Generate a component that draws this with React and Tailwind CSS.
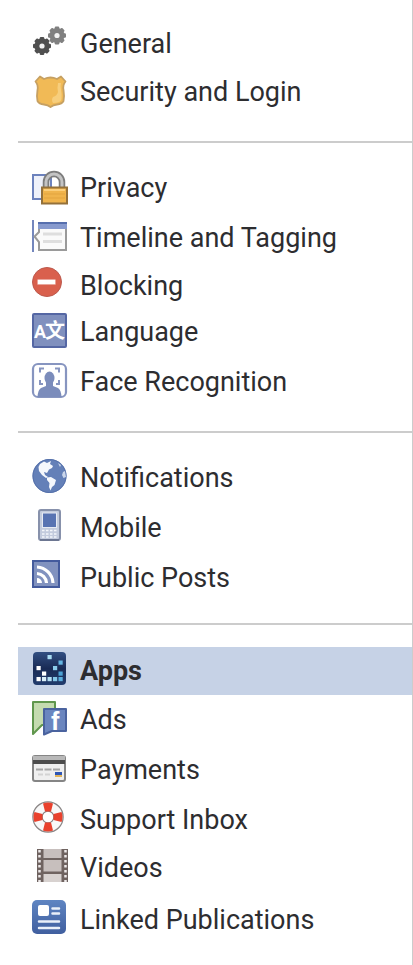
import { useState } from 'react';

function Icon({ children }) {
  return (
    <svg viewBox="0 0 40 40" className="size-10 shrink-0" aria-hidden="true">
      {children}
    </svg>
  );
}

function Gear({ cx, cy, color }) {
  return (
    <g transform={`translate(${cx} ${cy})`}>
      {[0, 45, 90, 135].map((angle) => (
        <rect key={angle} x="-2.3" y="-9" width="4.6" height="18" rx="1.2" fill={color} transform={`rotate(${angle})`} />
      ))}
      <circle r="7.6" fill={color} />
      <circle r="2.6" fill="#f3f3f3" />
    </g>
  );
}

function GearsIcon() {
  return (
    <Icon>
      <Gear cx={27} cy={11.5} color="#808080" />
      <Gear cx={12} cy={22} color="#505050" />
    </Icon>
  );
}

function ShieldIcon() {
  return (
    <Icon>
      <path
        d="M10 4.5 L14 7 Q20.5 4 27 7 L31 4.5 L35.5 9.5 Q32.5 13 33.5 18 Q34.5 24 33.5 29 Q32 32 27 32.5 Q23 33 20.5 35 Q18 33 14 32.5 Q9 32 7.5 29 Q6.5 24 7.5 18 Q8.5 13 5.5 9.5 Z"
        fill="#f1ba56"
        stroke="#c6a062"
        strokeWidth="1.8"
        strokeLinejoin="round"
      />
      <path d="M28 11 Q27 16 28 20 Q27 24 23 25 Q21 28 23 31 Q31 31 31.5 27 Q32 22 31 18 Q30 14 31 11 Z" fill="#f7ce7c" />
    </Icon>
  );
}

function LockIcon() {
  return (
    <Icon>
      <rect x="3" y="7" width="18" height="24" fill="#eef1fa" stroke="#6c82bd" strokeWidth="2" />
      <path d="M16 20 V14 a8 8 0 0 1 16 0 V20" fill="none" stroke="#7d7d7d" strokeWidth="6.5" />
      <path d="M16 20 V14 a8 8 0 0 1 16 0 V20" fill="none" stroke="#c4c4c4" strokeWidth="3" />
      <rect x="12" y="19.5" width="25" height="16" fill="#f0b44c" stroke="#94713a" strokeWidth="2" />
      <path d="M14 22 H35" stroke="#ffd98d" strokeWidth="1.5" />
      <path d="M14 26 H35 M14 30 H35" stroke="#e3a43e" strokeWidth="1" />
    </Icon>
  );
}

function TimelineIcon() {
  return (
    <Icon>
      <path d="M3 2 V34" stroke="#7487bd" strokeWidth="2" />
      <path d="M9 5 H36 V32 H9 V24 L4.5 18.5 L9 14 Z" fill="#fafafa" stroke="#9a9a9a" strokeWidth="2" />
      <rect x="8" y="4" width="29" height="7" fill="#879ace" />
      <path d="M8 5 H37" stroke="#566fae" strokeWidth="2" />
      <path d="M13 16 H32 M13 23.5 H32" stroke="#dedede" strokeWidth="3" />
    </Icon>
  );
}

function BlockIcon() {
  return (
    <Icon>
      <circle cx="17" cy="16" r="14.5" fill="#d9604d" stroke="#bc5a4e" />
      <rect x="7.5" y="13.5" width="18" height="5" rx="0.5" fill="#fff" stroke="#e69b90" strokeWidth="0.5" />
    </Icon>
  );
}

function LanguageIcon() {
  return (
    <Icon>
      <rect x="3" y="2" width="33" height="33" rx="1" fill="#8090be" stroke="#5567a4" strokeWidth="2" />
      <text x="4" y="26" fill="#fff" className="font-['Roboto',sans-serif] text-[18px] font-bold">A</text>
      <text x="15" y="26" fill="#fff" className="font-['Noto_Sans_CJK_SC',sans-serif] text-[20px] font-bold">文</text>
    </Icon>
  );
}

function FaceIcon() {
  return (
    <Icon>
      <rect x="3" y="2" width="33" height="33" rx="5" fill="#fff" stroke="#8795c0" strokeWidth="2.2" />
      <path
        d="M10 10.5 V6.5 H14 M25 6.5 H29 V10.5 M29 18 V22 H26 M13 22 H10 V18"
        fill="none"
        stroke="#8795c0"
        strokeWidth="2"
      />
      <ellipse cx="19.5" cy="16" rx="5" ry="6.5" fill="#7b8cbb" />
      <path d="M16 18 H23 V24 L28 26 Q31 27.5 31.5 35 H7.5 Q8 27.5 11 26 L16 24 Z" fill="#7b8cbb" />
    </Icon>
  );
}

function GlobeIcon() {
  return (
    <Icon>
      <circle cx="19.5" cy="18" r="17" fill="#6480b8" />
      <circle cx="19.5" cy="18" r="16.5" fill="none" stroke="#5570aa" />
      <path d="M10 6 L14 3.5 L17 5 L21 3 L20 6 L23 8 L22 10 L19 11.5 L17 15 L14 14 L15 17 L18 19 L16 20 L12 17 L9 13 L8.5 9 Z" fill="#f6f8fc" />
      <path d="M17 19.5 L21 19 L26 22 L24.5 27 L22 29 L20.5 32.5 L19 29 L19.5 25 L17 22 Z" fill="#f6f8fc" />
      <path d="M28 5 L31 7 L30 9 Z M33 14 L35 13 L36 19 L33.5 20 L32 17 Z" fill="#cbd6ea" />
    </Icon>
  );
}

function MobileIcon() {
  return (
    <Icon>
      <rect x="9" y="2" width="21" height="30" rx="2" fill="#c3cbdd" stroke="#8791ab" strokeWidth="2" />
      <path d="M10 32 H29" stroke="#636e89" strokeWidth="1.5" />
      <rect x="12.5" y="5" width="14" height="14.5" fill="#5873b2" stroke="#e6eaf3" />
      <path d="M12 22.5 H28 M12 26 H28 M12 29 H28" stroke="#f4f6fa" strokeWidth="1.6" strokeDasharray="2.5 1.5" />
    </Icon>
  );
}

function FeedIcon() {
  return (
    <Icon>
      <rect x="3" y="3" width="26" height="26" fill="#8192bf" stroke="#445b9d" strokeWidth="2" />
      <path d="M7 9 A17 17 0 0 1 23 25 M7 15.5 A10 10 0 0 1 16.5 25" fill="none" stroke="#fff" strokeWidth="3.2" />
      <path d="M7 20 A5 5 0 0 1 12 25 H7 Z" fill="#fff" />
    </Icon>
  );
}

// x, y, colour of each lit cell
const cells = [
  [17.5, 4, '#a9dcf3'],
  [28.5, 9.5, '#64b6e3'],
  [6.5, 15, '#ffffff'],
  [23, 15, '#8ccdec'],
  [12, 20.5, '#ffffff'],
  [28.5, 20.5, '#4ba1d4'],
  [6.5, 26, '#ffffff'],
  [12, 26, '#d9eff9'],
  [17.5, 26, '#b3dff3'],
  [23, 26, '#85c8e9'],
  [28.5, 26, '#5aaedd'],
];

function AppsIcon() {
  return (
    <Icon>
      <defs>
        <linearGradient id="apps-bg" x1="0" y1="0" x2="0" y2="1">
          <stop offset="0" stopColor="#324f82" />
          <stop offset="0.5" stopColor="#192b55" />
          <stop offset="1" stopColor="#223c6d" />
        </linearGradient>
      </defs>
      <rect x="3" y="1" width="33" height="33" rx="4" fill="url(#apps-bg)" />
      {cells.map(([x, y, color]) => (
        <rect key={`${x}-${y}`} x={x} y={y} width="4.2" height="4.2" fill={color} />
      ))}
    </Icon>
  );
}

function AdsIcon() {
  return (
    <Icon>
      <path d="M3 2 H25 V25 H12 L3 34 Z" fill="#c4dbaf" stroke="#60974d" strokeWidth="2" strokeLinejoin="round" />
      <path d="M14 9 H36 V31 H22 L14 34.5 Z" fill="#6b86bf" stroke="#4a639f" strokeWidth="2" strokeLinejoin="round" />
      <text x="21" y="30" fill="#fff" className="font-['Liberation_Sans',sans-serif] text-[25px] font-bold">f</text>
    </Icon>
  );
}

function CardIcon() {
  return (
    <Icon>
      <rect x="3" y="6" width="32" height="25" rx="2" fill="#efefef" stroke="#858585" strokeWidth="2" />
      <rect x="3" y="6" width="32" height="4" fill="#b8b8b8" />
      <rect x="3" y="10" width="32" height="4" fill="#4c4c4c" />
      <path d="M6 19.5 H31" stroke="#a5a5a5" strokeWidth="2" strokeDasharray="7 1.5" />
      <path d="M8 24.5 H21" stroke="#d3d3d3" strokeWidth="2" strokeDasharray="5 2" />
      <rect x="25" y="22" width="7" height="3" fill="#2f56b5" />
      <rect x="25" y="25" width="7" height="2" fill="#e2b459" />
    </Icon>
  );
}

function LifebuoyIcon() {
  return (
    <Icon>
      <circle cx="18" cy="17" r="10.5" fill="none" stroke="#8a8585" strokeWidth="10.5" />
      <circle cx="18" cy="17" r="10.5" fill="none" stroke="#f8f8f8" strokeWidth="8" />
      <path d="M13 3.5 Q18 1.5 23 3.5 L21 11.5 H15 Z M13 30.5 Q18 32.5 23 30.5 L21 22.5 H15 Z M4.5 12 Q2.5 17 4.5 22 L12.5 20 V14 Z M31.5 12 Q33.5 17 31.5 22 L23.5 20 V14 Z" fill="#e9412d" />
    </Icon>
  );
}

function FilmIcon() {
  return (
    <Icon>
      <rect x="7" y="1" width="31" height="33" fill="#6f6360" />
      <rect x="13.5" y="1" width="18" height="9" fill="#c7bfbd" />
      <rect x="13.5" y="12" width="18" height="11.5" fill="#c7bfbd" />
      <rect x="13.5" y="26" width="18" height="8" fill="#d8d2d0" />
      <path d="M9.5 2 V34 M35.5 2 V34" stroke="#eeeaea" strokeWidth="2.5" strokeDasharray="2.5 2.5" />
    </Icon>
  );
}

function PublicationIcon() {
  return (
    <Icon>
      <defs>
        <linearGradient id="publication-bg" x1="0" y1="0" x2="0" y2="1">
          <stop offset="0" stopColor="#5f85c2" />
          <stop offset="1" stopColor="#405f9f" />
        </linearGradient>
      </defs>
      <rect x="2" y="0" width="34" height="34" rx="5" fill="url(#publication-bg)" />
      <rect x="8" y="5" width="11" height="11" rx="2" fill="#fff" />
      <path d="M22.5 8.5 H29 M22.5 13.5 H29 M9 21.5 H29 M9 28 H29" stroke="#eaf0f9" strokeWidth="2.5" strokeLinecap="round" />
    </Icon>
  );
}

const sections = [
  {
    className: 'pt-[21px] pb-[26px]',
    items: [
      { label: 'General', icon: GearsIcon },
      { label: 'Security and Login', icon: ShieldIcon, spacing: 'mt-0.5' },
    ],
  },
  {
    className: 'pt-[22px] pb-[26px]',
    items: [
      { label: 'Privacy', icon: LockIcon },
      { label: 'Timeline and Tagging', icon: TimelineIcon, spacing: 'mt-1' },
      { label: 'Blocking', icon: BlockIcon, spacing: 'mt-0.5' },
      { label: 'Language', icon: LanguageIcon },
      { label: 'Face Recognition', icon: FaceIcon, spacing: 'mt-1' },
    ],
  },
  {
    className: 'py-[22px]',
    items: [
      { label: 'Notifications', icon: GlobeIcon },
      { label: 'Mobile', icon: MobileIcon, spacing: 'mt-1' },
      { label: 'Public Posts', icon: FeedIcon, spacing: 'mt-1' },
    ],
  },
  {
    className: 'py-[22px]',
    items: [
      { label: 'Apps', icon: AppsIcon },
      { label: 'Ads', icon: AdsIcon, spacing: 'mt-0.5' },
      { label: 'Payments', icon: CardIcon, spacing: 'mt-1' },
      { label: 'Support Inbox', icon: LifebuoyIcon, spacing: 'mt-1' },
      { label: 'Videos', icon: FilmIcon, spacing: 'mt-0.5' },
      { label: 'Linked Publications', icon: PublicationIcon, spacing: 'mt-1.5' },
    ],
  },
];

export default function App() {
  const [active, setActive] = useState('Apps');

  return (
    <nav
      aria-label="Settings"
      className="min-h-screen border-r border-[#cccccc] bg-white pl-[18px] font-['Roboto','Liberation_Sans',sans-serif] text-[27px] text-[#2d2d30]"
    >
      {sections.map((section, index) => (
        <ul key={index} className={`${section.className} ${index > 0 ? 'border-t-2 border-[#cccccc]' : ''}`}>
          {section.items.map(({ label, icon: ItemIcon, spacing }) => (
            <li key={label} className={spacing}>
              <a
                href="#"
                aria-current={active === label ? 'page' : undefined}
                onClick={(e) => {
                  e.preventDefault();
                  setActive(label);
                }}
                className={`flex items-center gap-2.5 pl-3 whitespace-nowrap ${
                  active === label ? 'h-12 bg-[#c6d2e6] font-bold' : 'h-[46px]'
                }`}
              >
                <ItemIcon />
                <span>{label}</span>
              </a>
            </li>
          ))}
        </ul>
      ))}
    </nav>
  );
}
